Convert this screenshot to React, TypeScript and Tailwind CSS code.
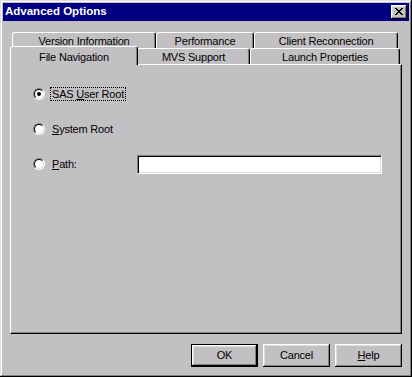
import React from 'react';

// classic 3D edges
const raised =
  'shadow-[inset_-1px_-1px_0_#000,inset_1px_1px_0_#fff,inset_-2px_-2px_0_#808080,inset_2px_2px_0_#dfdfdf]';

const Radio: React.FC<{ checked?: boolean }> = ({ checked }) => (
  <span className="w-[12px] h-[12px] rounded-full border border-t-[#808080] border-l-[#808080] border-b-white border-r-white flex-none">
    <span className="w-full h-full rounded-full border border-t-black border-l-black border-b-[#dfdfdf] border-r-[#dfdfdf] bg-white flex items-center justify-center">
      {checked && <span className="w-[4px] h-[4px] rounded-full bg-black" />}
    </span>
  </span>
);

const BackTab: React.FC<{ w: string; label: string }> = ({ w, label }) => (
  <div
    className={`${w} h-[16px] border-l border-t border-white border-r border-r-black rounded-t-[3px] shadow-[inset_-1px_0_0_#808080] flex items-center justify-center pt-[1px]`}
  >
    {label}
  </div>
);

const CloseGlyph = () => (
  <svg width="8" height="7" viewBox="0 0 8 7" shapeRendering="crispEdges">
    {[
      [0, 0], [6, 0], [1, 1], [5, 1], [2, 2], [4, 2], [3, 3], [2, 4], [4, 4], [1, 5], [5, 5], [0, 6], [6, 6],
    ].map(([x, y], i) => (
      <rect key={i} x={x} y={y} width={2} height={1} fill="#000" />
    ))}
  </svg>
);

export default function App() {
  return (
    <div className="w-[412px] h-[377px] bg-[#c2c0c2] p-[3px] flex flex-col text-black text-[11px] tracking-[-0.2px] font-['Liberation_Sans',Arial,sans-serif] shadow-[inset_-1px_-1px_0_#000,inset_1px_1px_0_#dfdfdf,inset_-2px_-2px_0_#808080,inset_2px_2px_0_#fff]">
      {/* title bar */}
      <div className="h-[18px] bg-[#000080] flex items-center justify-between pl-[2px] pr-[2px]">
        <span className="text-white font-bold text-[11.5px] tracking-normal">Advanced Options</span>
        <button className={`w-[16px] h-[14px] bg-[#c2c0c2] ${raised} flex items-center justify-center pb-[1px]`}>
          <CloseGlyph />
        </button>
      </div>

      {/* tab rows */}
      <div className="mt-[11px] flex ml-[9px]">
        <BackTab w="w-[144px]" label="Version Information" />
        <BackTab w="w-[98px]" label="Performance" />
        <BackTab w="w-[144px]" label="Client Reconnection" />
      </div>
      <div className="-mt-[2px] h-[18px] flex items-start ml-[7px] relative z-10">
        <div className="w-[128px] h-[19px] bg-[#c2c0c2] border-l border-t border-white border-r border-r-black rounded-t-[3px] shadow-[inset_-1px_0_0_#808080] flex items-start justify-center pt-[2px]">
          File Navigation
        </div>
        <div className="mt-[2px] flex">
          <div className="w-[112px] h-[16px] border-t border-white border-r border-r-black rounded-tr-[3px] shadow-[inset_-1px_0_0_#808080] flex items-center justify-center pt-[1px]">
            MVS Support
          </div>
          <BackTab w="w-[150px]" label="Launch Properties" />
        </div>
      </div>

      {/* panel */}
      <div className="ml-[7px] w-[392px] h-[270px] border-l border-t border-white border-r border-b border-r-black border-b-black shadow-[inset_-1px_-1px_0_#808080] pl-[22px] pt-[19px] flex flex-col gap-[15px]">
        <div className="h-[20px] flex items-center">
          <Radio checked />
          <span className="ml-[5px] px-[1px] border border-dotted border-black leading-[12px]">
            SAS <u>U</u>ser Root
          </span>
        </div>
        <div className="h-[20px] flex items-center">
          <Radio />
          <span className="ml-[5px] px-[1px] border border-transparent leading-[12px]">
            <u>S</u>ystem Root
          </span>
        </div>
        <div className="h-[20px] flex items-center">
          <div className="w-[104px] flex items-center">
            <Radio />
            <span className="ml-[5px] px-[1px] border border-transparent leading-[12px]">
              <u>P</u>ath:
            </span>
          </div>
          <div className="w-[245px] h-[19px] bg-white border border-t-[#808080] border-l-[#808080] border-b-white border-r-white shadow-[inset_1px_1px_0_#000,inset_-1px_-1px_0_#dfdfdf]" />
        </div>
      </div>

      {/* buttons */}
      <div className="mt-[10px] flex justify-end gap-[5px] pr-[7px]">
        <button className="w-[67px] h-[23px] border border-black flex">
          <span className={`flex-1 flex items-center justify-center ${raised}`}>OK</span>
        </button>
        <button className={`w-[67px] h-[23px] flex items-center justify-center ${raised}`}>Cancel</button>
        <button className={`w-[67px] h-[23px] flex items-center justify-center ${raised}`}>
          <span>
            <u>H</u>elp
          </span>
        </button>
      </div>
    </div>
  );
}
